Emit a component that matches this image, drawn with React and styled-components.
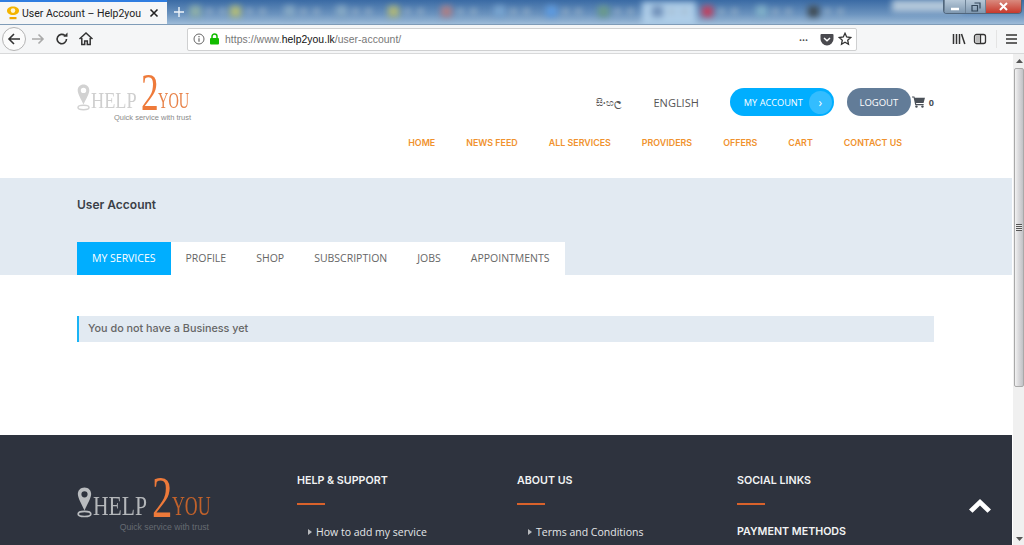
import React from 'react';
import styled, { createGlobalStyle } from 'styled-components';

const blurTabs = [
  { left: 190, color: '#8fb0a8' },
  { left: 230, color: '#b4bd78' },
  { left: 284, color: '#86a8c4' },
  { left: 336, color: '#86a8c4' },
  { left: 388, color: '#b0b878' },
  { left: 441, color: '#ad7f86' },
  { left: 494, color: '#78a4d0' },
  { left: 546, color: '#5c9ae0' },
  { left: 598, color: '#6a9a8a' },
  { left: 652, color: '#6f8fb8' },
  { left: 702, color: '#c0405e' },
  { left: 756, color: '#80b0c8' },
  { left: 808, color: '#3f4a52' },
];

const navLinks = ['HOME', 'NEWS FEED', 'ALL SERVICES', 'PROVIDERS', 'OFFERS', 'CART', 'CONTACT US'];
const accountTabs = ['MY SERVICES', 'PROFILE', 'SHOP', 'SUBSCRIPTION', 'JOBS', 'APPOINTMENTS'];

const PinIcon = ({ color, dark }) => (
  <svg width={dark ? 15 : 13} height={dark ? 31 : 27} viewBox="0 0 13 27">
    <path
      d="M6.500 0.500C3 0.500 0.700 3 0.700 6.200c0 3.600 3.400 9 5.800 14.300 2.400-5.300 5.800-10.700 5.800-14.300C12.300 3 10 0.500 6.500 0.500zm0 3.200a2.700 2.700 0 1 1 0 5.400 2.700 2.700 0 0 1 0-5.400z"
      fill={color}
      fillRule="evenodd"
    />
    <ellipse cx="6.500" cy="23.500" rx="5.500" ry="2.200" fill="none" stroke={color} strokeWidth="1.500" />
  </svg>
);

const Logo = ({ dark }) => (
  <LogoBox>
    <LogoMark>
      <PinIcon dark={dark} color={dark ? '#b9bcbf' : '#d2d2d2'} />
      <LogoHelp $dark={dark}>HELP</LogoHelp>
      <LogoTwo $dark={dark}>2</LogoTwo>
      <LogoYou $dark={dark}>YOU</LogoYou>
    </LogoMark>
    <LogoTag $dark={dark}>Quick service with trust</LogoTag>
  </LogoBox>
);

const App = () => (
  <>
    <GlobalStyle />
    <Screen>
      <TabStrip>
        <BlurLayer>
          <ActiveGlow />
          <EdgeGlow />
          {blurTabs.map(({ left, color }) => (
            <BlurDot key={left} $left={left} $color={color} />
          ))}
        </BlurLayer>
        <ActiveTab>
          <svg width="16" height="16" viewBox="0 0 16 16">
            <path d="M8 1.500C4.500 1.500 2 3.300 2 5.700c0 2.500 2.700 4.300 6 4.300s6-1.800 6-4.300C14 3.300 11.500 1.500 8 1.500z" fill="#f4b400" />
            <circle cx="8" cy="5.600" r="2.300" fill="#fff6d8" />
            <path d="M4.500 12h7v2.200h-7z" fill="#f0a800" />
          </svg>
          <TabTitle>User Account – Help2you</TabTitle>
          <svg width="10" height="10" viewBox="0 0 10 10">
            <path d="M1.500 1.500l7 7M8.500 1.500l-7 7" stroke="#222" strokeWidth="1.600" />
          </svg>
        </ActiveTab>
        <NewTab>
          <svg width="12" height="12" viewBox="0 0 12 12">
            <path d="M6 1v10M1 6h10" stroke="#f0f5fa" strokeWidth="1.400" />
          </svg>
        </NewTab>
        <WindowControls>
          <WinButton $width={21}>
            <svg width="10" height="8" viewBox="0 0 10 8"><path d="M1 6h8" stroke="#fff" strokeWidth="2.400" /></svg>
          </WinButton>
          <WinButton $width={20}>
            <svg width="10" height="10" viewBox="0 0 10 10">
              <path d="M3.500 1h5.500v5.500M1 3.500h5.500V9H1z" fill="none" stroke="#33475a" strokeWidth="1.200" />
            </svg>
          </WinButton>
          <WinButton $width={36} $close>
            <svg width="9" height="9" viewBox="0 0 9 9"><path d="M1 1l7 7M8 1l-7 7" stroke="#fff" strokeWidth="2" /></svg>
          </WinButton>
        </WindowControls>
      </TabStrip>

      <ToolBar>
        <BackButton>
          <svg width="16" height="16" viewBox="0 0 16 16">
            <path d="M14 8H3M8 3L3 8l5 5" fill="none" stroke="#333" strokeWidth="1.600" />
          </svg>
        </BackButton>
        <ToolIcon>
          <svg width="16" height="16" viewBox="0 0 16 16">
            <path d="M2 8h11M8.500 3.500L13 8l-4.500 4.500" fill="none" stroke="#aaa" strokeWidth="1.600" />
          </svg>
        </ToolIcon>
        <ToolIcon>
          <svg width="16" height="16" viewBox="0 0 16 16">
            <path d="M12.500 8a4.700 4.700 0 1 1-1.500-3.400" fill="none" stroke="#333" strokeWidth="1.600" />
            <path d="M13.500 1.500v4.200H9.300z" fill="#333" />
          </svg>
        </ToolIcon>
        <ToolIcon>
          <svg width="16" height="16" viewBox="0 0 16 16">
            <path d="M1.500 8L8 2l6.500 6M3.800 7v6.500h2.900V10h2.600v3.500h2.900V7" fill="none" stroke="#333" strokeWidth="1.500" />
          </svg>
        </ToolIcon>
        <UrlBar>
          <svg width="12" height="12" viewBox="0 0 12 12">
            <circle cx="6" cy="6" r="5" fill="none" stroke="#666" strokeWidth="1" />
            <path d="M6 5.200v3.600M6 3v1.200" stroke="#666" strokeWidth="1.200" />
          </svg>
          <svg width="11" height="12" viewBox="0 0 11 12">
            <path d="M3 5.500V3.500a2.500 2.500 0 0 1 5 0v2" fill="none" stroke="#12bc00" strokeWidth="1.500" />
            <rect x="1" y="5" width="9" height="6.500" rx="1" fill="#12bc00" />
          </svg>
          <UrlText>
            https://www.<b>help2you.lk</b>/user-account/
          </UrlText>
          <UrlDots>•••</UrlDots>
          <svg width="14" height="13" viewBox="0 0 14 13">
            <path d="M1.500 1h11a1 1 0 0 1 1 1v4a6.500 6.500 0 0 1-13 0V2a1 1 0 0 1 1-1z" fill="#4a4a4f" />
            <path d="M4 5l3 2.800L10 5" fill="none" stroke="#fff" strokeWidth="1.500" />
          </svg>
          <svg width="14" height="14" viewBox="0 0 14 14">
            <path d="M7 1.300l1.700 3.700 4 .5-3 2.700.8 4L7 10.300l-3.500 1.900.8-4-3-2.700 4-.5z" fill="none" stroke="#333" strokeWidth="1.300" />
          </svg>
        </UrlBar>
        <RightTools>
          <svg width="14" height="14" viewBox="0 0 14 14">
            <path d="M1.500 2v10M4.500 2v10M7.500 2v10M9.500 2l3.300 10" fill="none" stroke="#333" strokeWidth="1.500" />
          </svg>
          <svg width="14" height="14" viewBox="0 0 14 14">
            <rect x="1.500" y="2.500" width="11" height="9" rx="2" fill="none" stroke="#333" strokeWidth="1.300" />
            <path d="M7.500 3v8" stroke="#333" strokeWidth="1.300" />
            <path d="M2.500 3.500H7v7H2.500z" fill="#bbb" />
          </svg>
          <ToolSeparator />
          <svg width="14" height="14" viewBox="0 0 14 14">
            <path d="M2 3h11M2 7h11M2 11h11" stroke="#333" strokeWidth="1.500" />
          </svg>
        </RightTools>
      </ToolBar>

      <Viewport>
        <Page>
          <SiteHeader>
            <HeaderTop>
              <Logo />
              <HeaderActions>
                <LangSinhala>සිංහල</LangSinhala>
                <LangEnglish>ENGLISH</LangEnglish>
                <AccountButton>
                  MY ACCOUNT
                  <AccountArrow>›</AccountArrow>
                </AccountButton>
                <LogoutButton>LOGOUT</LogoutButton>
                <CartBox>
                  <svg width="13" height="12" viewBox="0 0 14 13">
                    <path d="M0 .5h2.500l.5 1.500H14l-1.500 5.500H4.300l.3 1.200h8v1.200H3.500L1.700 1.700H0z" fill="#4a5058" />
                    <circle cx="4.800" cy="11.500" r="1.300" fill="#4a5058" />
                    <circle cx="11.300" cy="11.500" r="1.300" fill="#4a5058" />
                  </svg>
                  <CartCount>0</CartCount>
                </CartBox>
              </HeaderActions>
            </HeaderTop>
            <MainNav>
              {navLinks.map((link) => (
                <NavLink key={link}>{link}</NavLink>
              ))}
            </MainNav>
          </SiteHeader>

          <Banner>
            <PageTitle>User Account</PageTitle>
            <TabList>
              {accountTabs.map((tab, i) => (
                <TabItem key={tab} $active={i === 0}>{tab}</TabItem>
              ))}
            </TabList>
          </Banner>

          <Content>
            <Notice>You do not have a Business yet</Notice>
          </Content>

          <Footer>
            <FooterLogo>
              <Logo dark />
            </FooterLogo>
            <FooterColumn>
              <FooterHeading>HELP &amp; SUPPORT</FooterHeading>
              <FooterRule />
              <FooterLink>How to add my service</FooterLink>
            </FooterColumn>
            <FooterColumn>
              <FooterHeading>ABOUT US</FooterHeading>
              <FooterRule />
              <FooterLink>Terms and Conditions</FooterLink>
            </FooterColumn>
            <FooterColumn>
              <FooterHeading>SOCIAL LINKS</FooterHeading>
              <FooterRule />
              <PaymentHeading>PAYMENT METHODS</PaymentHeading>
            </FooterColumn>
            <ToTop>
              <svg width="22" height="14" viewBox="0 0 22 14">
                <path d="M11 0l11 10.500-3.500 3.300L11 6.600 3.500 13.800 0 10.500z" fill="#fff" />
              </svg>
            </ToTop>
          </Footer>
        </Page>
        <ScrollBar>
          <ScrollArrow>
            <svg width="7" height="4" viewBox="0 0 7 4"><path d="M3.500 0L7 4H0z" fill="#555" /></svg>
          </ScrollArrow>
          <ScrollThumb>
            <ScrollGrip />
          </ScrollThumb>
          <ScrollArrow $bottom>
            <svg width="7" height="4" viewBox="0 0 7 4"><path d="M0 0h7L3.500 4z" fill="#555" /></svg>
          </ScrollArrow>
        </ScrollBar>
      </Viewport>
    </Screen>
  </>
);

const GlobalStyle = createGlobalStyle`
  html, body {
    margin: 0;
    padding: 0;
    height: 545px;
    overflow: hidden;
    background: #fff;
  }
  * {
    box-sizing: border-box;
  }
`;

const Screen = styled.div`
  width: 1024px;
  height: 545px;
  display: flex;
  flex-direction: column;
  overflow: hidden;
  font-family: 'Open Sans', sans-serif;
`;

const TabStrip = styled.div`
  position: relative;
  height: 25px;
  display: flex;
  align-items: stretch;
  overflow: hidden;
  background: linear-gradient(to bottom, #3a6aa4 0%, #6c94bf 60%, #9dbbd8 100%);
  border-bottom: 1px solid #7f9cb8;
`;

const BlurLayer = styled.div`
  position: absolute;
  inset: 0;
  filter: blur(3px);
`;

const BlurDot = styled.div`
  position: absolute;
  top: 6px;
  left: ${(p) => p.$left}px;
  width: 11px;
  height: 11px;
  background: ${(p) => p.$color};
  box-shadow: 14px 0 0 -3px #a3b8ca, 27px 0 0 -3px #a3b8ca;
`;

const ActiveGlow = styled.div`
  position: absolute;
  left: 642px;
  top: 2px;
  width: 54px;
  height: 24px;
  background: #aecde8;
`;

const EdgeGlow = styled.div`
  position: absolute;
  left: 892px;
  top: 0;
  width: 70px;
  height: 12px;
  background: #b4c8da;
`;

const ActiveTab = styled.div`
  position: relative;
  width: 167px;
  display: flex;
  align-items: center;
  padding: 0 8px 0 5px;
  gap: 1px;
  background: #f5f6f7;
  border-top: 2px solid #2f7de0;
`;

const TabTitle = styled.span`
  flex: 1;
  font-family: 'Roboto', sans-serif;
  font-size: 10.500px;
  white-space: nowrap;
  color: #222;
`;

const NewTab = styled.div`
  position: relative;
  width: 24px;
  display: flex;
  align-items: center;
  justify-content: center;
`;

const WindowControls = styled.div`
  position: absolute;
  right: 2px;
  top: 0;
  height: 14px;
  display: flex;
  border: 1px solid #50667c;
  border-top: 0;
  border-radius: 0 0 4px 4px;
  overflow: hidden;
`;

const WinButton = styled.div`
  width: ${(p) => p.$width}px;
  display: flex;
  align-items: center;
  justify-content: center;
  border-left: 1px solid #6d8296;
  background: ${(p) =>
    p.$close
      ? 'linear-gradient(to bottom, #d98a7e, #c8392c)'
      : 'linear-gradient(to bottom, #b6c8d8, #7f98b0)'};
`;

const ToolBar = styled.div`
  height: 29px;
  display: flex;
  align-items: center;
  padding: 0 6px 0 2px;
  background: #f5f6f7;
  border-bottom: 1px solid #d8d9da;
`;

const BackButton = styled.div`
  width: 24px;
  height: 24px;
  display: flex;
  align-items: center;
  justify-content: center;
  border: 1px solid #b4b4b4;
  border-radius: 50%;
  background: #fbfbfb;
`;

const ToolIcon = styled.div`
  width: 24px;
  display: flex;
  justify-content: center;
`;

const UrlBar = styled.div`
  width: 670px;
  height: 23px;
  margin-left: 89px;
  display: flex;
  align-items: center;
  padding: 0 4px 0 5px;
  gap: 4px;
  background: #fff;
  border: 1px solid #cfd0d1;
  border-radius: 2px;
`;

const UrlText = styled.span`
  flex: 1;
  margin-left: 1px;
  font-family: 'Liberation Sans', sans-serif;
  font-size: 10.400px;
  letter-spacing: 0.050px;
  color: #777;
  b {
    font-weight: 400;
    color: #111;
  }
`;

const UrlDots = styled.span`
  font-size: 8px;
  color: #555;
  margin-right: 8px;
`;

const RightTools = styled.div`
  flex: 1;
  display: flex;
  align-items: center;
  justify-content: flex-end;
  gap: 7px;
`;

const ToolSeparator = styled.div`
  width: 1px;
  height: 18px;
  margin-left: 2px;
  background: #e4e4e4;
`;

const Viewport = styled.div`
  flex: 1;
  min-height: 0;
  display: flex;
  overflow: hidden;
`;

const Page = styled.div`
  width: 1012px;
  overflow: hidden;
`;

const ScrollBar = styled.div`
  width: 12px;
  height: 491px;
  display: flex;
  flex-direction: column;
  padding-left: 1px;
  background: #f0f0f0;
  border-left: 1px solid #fff;
`;

const ScrollArrow = styled.div`
  height: 13px;
  display: flex;
  align-items: center;
  justify-content: center;
  margin-top: ${(p) => (p.$bottom ? 'auto' : '0')};
`;

const ScrollThumb = styled.div`
  height: 319px;
  margin-top: 1px;
  display: flex;
  align-items: center;
  justify-content: center;
  border: 1px solid #a9a9a9;
  border-radius: 2px;
  background: linear-gradient(to right, #f2f2f2, #dcdcde 40%, #c2c2c6);
`;

const ScrollGrip = styled.div`
  width: 6px;
  height: 7px;
  background: repeating-linear-gradient(to bottom, #555 0 1px, #e8e8e8 1px 2px);
`;

const SiteHeader = styled.header`
  height: 124px;
  padding: 21px 78px 0 77px;
  background: #fff;
`;

const HeaderTop = styled.div`
  height: 58px;
  display: flex;
  align-items: flex-start;
  justify-content: space-between;
`;

const LogoBox = styled.div`
  display: flex;
  flex-direction: column;
  align-items: flex-end;
`;

const LogoMark = styled.div`
  display: flex;
  align-items: flex-end;
`;

const LogoHelp = styled.span`
  display: inline-block;
  width: ${(p) => (p.$dark ? '59px' : '50px')};
  margin-left: 1px;
  font-family: 'Liberation Serif', serif;
  font-size: ${(p) => (p.$dark ? '27px' : '24px')};
  line-height: ${(p) => (p.$dark ? '24px' : '21px')};
  white-space: nowrap;
  transform: scaleX(${(p) => (p.$dark ? 0.8 : 0.76)});
  transform-origin: left bottom;
  color: ${(p) => (p.$dark ? '#b4b7ba' : '#cfcfcf')};
`;

const LogoTwo = styled.span`
  display: inline-block;
  margin-right: ${(p) => (p.$dark ? '-10px' : '-9px')};
  font-family: 'Liberation Serif', serif;
  font-size: ${(p) => (p.$dark ? '60px' : '52px')};
  line-height: ${(p) => (p.$dark ? '41px' : '36px')};
  transform: scaleX(0.68);
  transform-origin: left bottom;
  color: #ee7a3a;
`;

const LogoYou = styled.span`
  display: inline-block;
  width: ${(p) => (p.$dark ? '37px' : '33px')};
  font-family: 'Liberation Serif', serif;
  font-size: ${(p) => (p.$dark ? '27px' : '24px')};
  line-height: ${(p) => (p.$dark ? '24px' : '21px')};
  white-space: nowrap;
  transform: scaleX(${(p) => (p.$dark ? 0.66 : 0.6)});
  transform-origin: left bottom;
  color: ${(p) => (p.$dark ? '#c2622b' : '#e8834a')};
`;

const LogoTag = styled.span`
  margin-top: ${(p) => (p.$dark ? '4px' : '2px')};
  font-family: 'Liberation Sans', sans-serif;
  font-size: ${(p) => (p.$dark ? '8.700px' : '7.500px')};
  line-height: 10px;
  white-space: nowrap;
  color: ${(p) => (p.$dark ? '#666b72' : '#8a8a8a')};
`;

const HeaderActions = styled.div`
  display: flex;
  align-items: center;
  margin-top: 13px;
`;

const LangSinhala = styled.span`
  font-family: 'Noto Sans', 'DejaVu Sans', sans-serif;
  font-size: 9.500px;
  color: #555;
  margin-right: 31px;
`;

const LangEnglish = styled.span`
  font-size: 11px;
  color: #555;
  margin-right: 31px;
`;

const AccountButton = styled.div`
  width: 104px;
  height: 28px;
  display: flex;
  align-items: center;
  justify-content: space-between;
  padding: 0 2px 0 14px;
  border-radius: 14px;
  font-size: 9.200px;
  color: #fff;
  background: #00aeff;
`;

const AccountArrow = styled.span`
  width: 23px;
  height: 23px;
  display: flex;
  align-items: center;
  justify-content: center;
  border-radius: 50%;
  font-size: 12px;
  background: #33bdff;
`;

const LogoutButton = styled.div`
  width: 64px;
  height: 28px;
  margin-left: 13px;
  display: flex;
  align-items: center;
  justify-content: center;
  border-radius: 14px;
  font-size: 9.500px;
  color: #fff;
  background: #627c98;
`;

const CartBox = styled.div`
  display: flex;
  align-items: center;
  gap: 4px;
  margin-left: 1px;
`;

const CartCount = styled.span`
  font-size: 9px;
  font-weight: 700;
  color: #4a5058;
`;

const MainNav = styled.nav`
  display: flex;
  justify-content: flex-end;
  gap: 31px;
  padding-right: 32px;
`;

const NavLink = styled.a`
  font-family: 'Inter', sans-serif;
  font-size: 8.900px;
  font-weight: 600;
  line-height: 20px;
  color: #f0922e;
`;

const Banner = styled.section`
  height: 97px;
  padding: 19px 0 0 77px;
  background: #e2eaf2;
`;

const PageTitle = styled.h1`
  margin: 0;
  font-family: 'Inter', sans-serif;
  font-size: 12px;
  font-weight: 600;
  line-height: 16px;
  color: #3a3f47;
`;

const TabList = styled.div`
  display: inline-flex;
  height: 33px;
  margin-top: 29px;
  background: #fff;
`;

const TabItem = styled.div`
  display: flex;
  align-items: center;
  padding: 0 15px 2px;
  font-size: 10.500px;
  color: ${(p) => (p.$active ? '#fff' : '#666')};
  background: ${(p) => (p.$active ? '#00aeff' : 'transparent')};
`;

const Content = styled.section`
  height: 160px;
  padding: 41px 78px 0 77px;
  background: #fff;
`;

const Notice = styled.div`
  height: 26px;
  display: flex;
  align-items: center;
  padding: 0 0 2px 9px;
  font-family: 'Inter', sans-serif;
  font-size: 10.800px;
  font-weight: 500;
  color: #666;
  background: #e2eaf2;
  border-left: 2px solid #1ab4f5;
`;

const Footer = styled.footer`
  position: relative;
  height: 110px;
  display: grid;
  grid-template-columns: 220px 220px 220px 1fr;
  padding: 37px 78px 0 77px;
  background: #2e333e;
`;

const FooterLogo = styled.div`
  justify-self: start;
  margin-top: 5px;
`;

const FooterColumn = styled.div`
  display: flex;
  flex-direction: column;
  align-items: flex-start;
`;

const FooterHeading = styled.h4`
  margin: 0;
  font-family: 'Inter', sans-serif;
  font-size: 10.700px;
  font-weight: 600;
  line-height: 18px;
  color: #f2f3f4;
`;

const PaymentHeading = styled(FooterHeading)`
  margin-top: 18px;
`;

const FooterRule = styled.div`
  width: 28px;
  height: 2px;
  margin-top: 13px;
  background: #d9622b;
`;

const FooterLink = styled.a`
  position: relative;
  margin-top: 19px;
  padding-left: 19px;
  font-size: 10.500px;
  line-height: 16px;
  color: #e4e6e8;
  &::before {
    content: '';
    position: absolute;
    left: 11px;
    top: 5px;
    border-left: 4px solid #b8babd;
    border-top: 3px solid transparent;
    border-bottom: 3px solid transparent;
  }
`;

const ToTop = styled.div`
  position: absolute;
  right: 21px;
  top: 64px;
  line-height: 0;
`;

export default App;
